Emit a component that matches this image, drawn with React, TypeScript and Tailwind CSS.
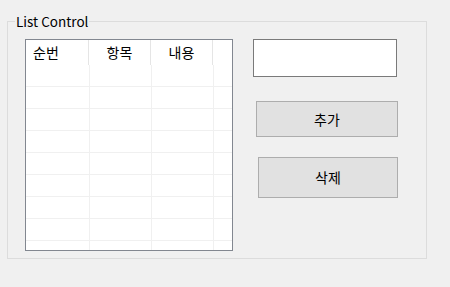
const rows = Array.from({ length: 9 }, (_, i) => i);

function ListControl() {
  return (
    <div className="h-[212px] w-[208px] overflow-hidden border border-[#828790] bg-white">
      <div className="flex h-[25px] text-[14px] leading-[25px] text-black">
        <div className="w-[63px] border-r border-[#e5e5e5] pl-[7px]">순번</div>
        <div className="w-[62px] border-r border-[#e5e5e5] text-center">항목</div>
        <div className="w-[62px] border-r border-[#e5e5e5] text-center">내용</div>
      </div>
      {rows.map((r) => (
        <div className="flex h-[22px] border-b border-[#f0f0f0]" key={r}>
          <div className="w-[64px] border-r border-[#f0f0f0]" />
          <div className="w-[62px] border-r border-[#f0f0f0]" />
          <div className="w-[62px] border-r border-[#f0f0f0]" />
        </div>
      ))}
    </div>
  );
}

export default function App() {
  return (
    <div
      className="h-[287px] w-[450px] overflow-hidden bg-[#f0f0f0] pt-[21px] pl-[7px]"
      style={{ fontFamily: '"Noto Sans CJK KR", "Liberation Sans", sans-serif' }}
    >
      <div className="relative h-[238px] w-[420px] border border-[#dcdcdc]">
        <span className="absolute top-[-11px] left-[7px] bg-[#f0f0f0] px-[1px] text-[13.5px] leading-[20px] text-black">
          List Control
        </span>
        <div className="flex pt-[17px] pl-[17px]">
          <ListControl />
          <div className="ml-[20px] flex flex-col items-start">
            <div className="h-[38px] w-[144px] border border-[#7a7a7a] bg-white" />
            <button className="mt-[24px] ml-[3px] h-[36px] w-[142px] border border-[#adadad] bg-[#e1e1e1] text-[14px] text-black">
              추가
            </button>
            <button className="mt-[20px] ml-[5px] h-[41px] w-[140px] border border-[#adadad] bg-[#e1e1e1] text-[14px] text-black">
              삭제
            </button>
          </div>
        </div>
      </div>
    </div>
  );
}
